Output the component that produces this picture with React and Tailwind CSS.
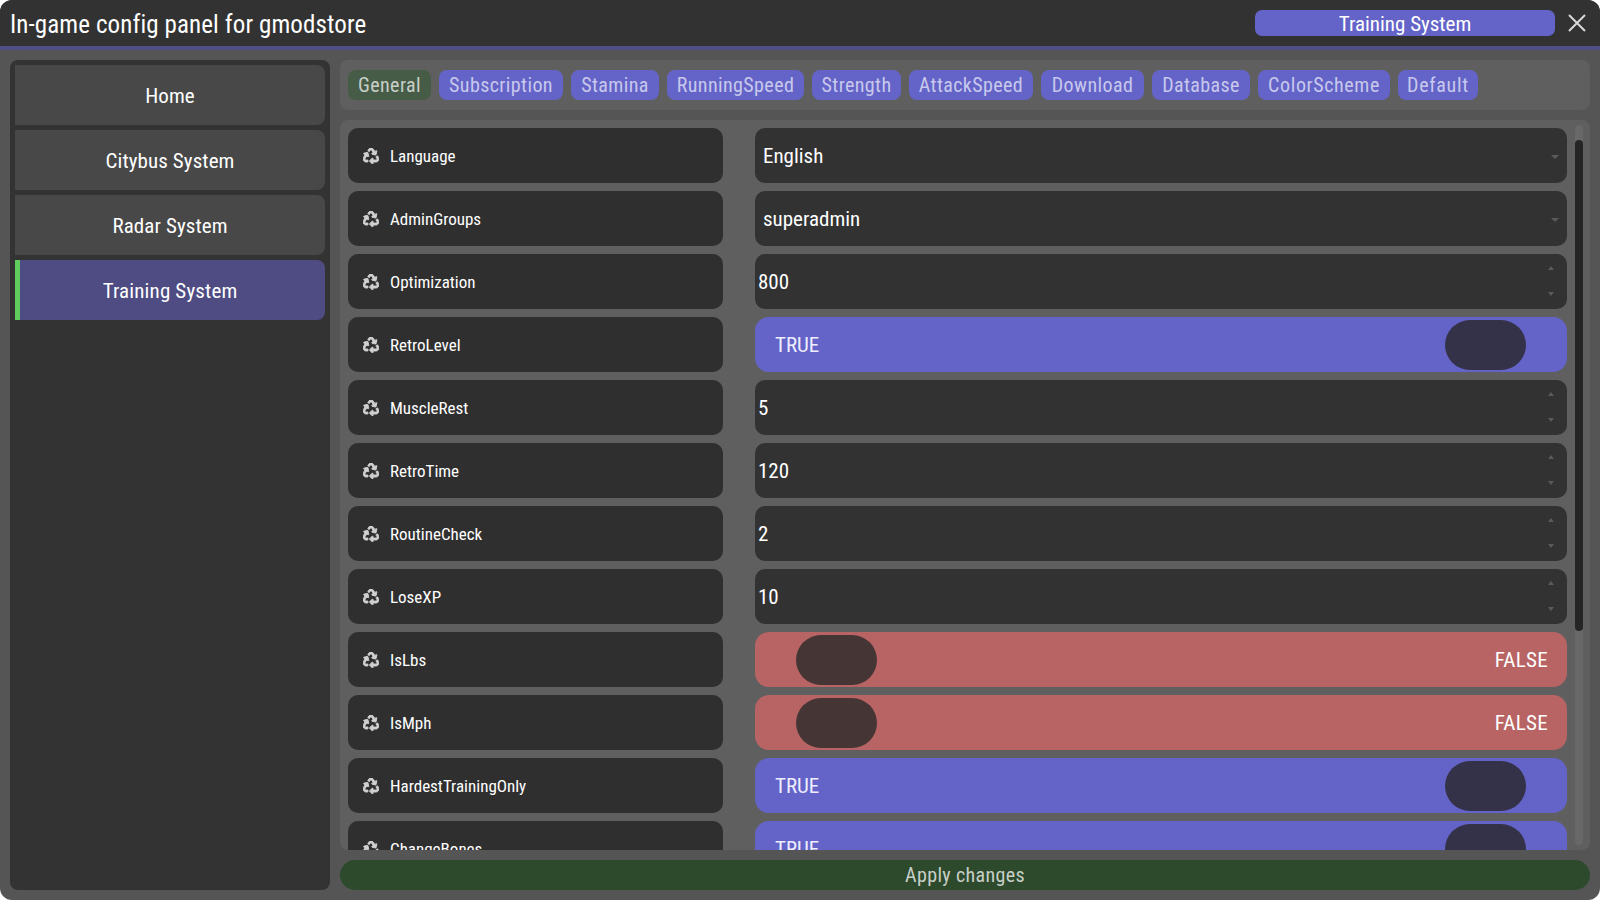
import { FaRecycle } from "react-icons/fa";

const FONT = "font-['Roboto',sans-serif] font-stretch-condensed";

const tabs = [
  ["Subscription","w-[124px]"],
  ["Stamina","w-[88px]"],
  ["RunningSpeed","w-[137px]"],
  ["Strength","w-[89px]"],
  ["AttackSpeed","w-[124px]"],
  ["Download","w-[103px]"],
  ["Database","w-[98px]"],
  ["ColorScheme","w-[132px] tracking-[0.6px]"],
  ["Default","w-[80px] tracking-[0.7px]"],
];
const side = ["Home","Citybus System","Radar System"];
const rows = [
  ["Language","s","English"],
  ["AdminGroups","s","superadmin"],
  ["Optimization","n","800"],
  ["RetroLevel","t"],
  ["MuscleRest","n","5"],
  ["RetroTime","n","120"],
  ["RoutineCheck","n","2"],
  ["LoseXP","n","10"],
  ["IsLbs","f"],
  ["IsMph","f"],
  ["HardestTrainingOnly","t"],
  ["ChangeBones","t"],
];

function Control({ kind, value }) {
  if (kind === "t") return (
    <div className="flex-1 h-full rounded-[14px] bg-[#6464c8] flex items-center justify-between pl-5 pr-[41px] text-[21px] text-[#eeeeff]">
      <span className="pt-[2px]">TRUE</span>
      <div className="w-[81px] h-[50px] rounded-[25px] bg-[#343248]" />
    </div>
  );
  if (kind === "f") return (
    <div className="flex-1 h-full rounded-[14px] bg-[#b86464] flex items-center justify-between pl-[41px] pr-[19px] text-[21px] tracking-[0.3px] text-white">
      <div className="w-[81px] h-[50px] rounded-[25px] bg-[#453535]" />
      <span className="pt-[2px]">FALSE</span>
    </div>
  );
  if (kind === "s") return (
    <div className="flex-1 h-full rounded-[10px] bg-[#323232] flex items-center justify-between pl-2 pr-[8px] text-[21px] text-white">
      <span className="pt-[2px]">{value}</span>
      <span className="w-0 h-0 mt-[2px] border-x-[4px] border-x-transparent border-t-[4px] border-t-[#5a5a5a]" />
    </div>
  );
  return (
    <div className="flex-1 h-full rounded-[10px] bg-[#323232] flex items-center justify-between pl-[3px] pr-3 text-[21px] text-white">
      <span className="pt-[2px]">{value}</span>
      <div className="flex flex-col gap-[22px] pr-[1px] mb-[2px]">
        <span className="w-0 h-0 border-x-[3px] border-x-transparent border-b-[4px] border-b-[#5a5a5a]" />
        <span className="w-0 h-0 border-x-[3px] border-x-transparent border-t-[4px] border-t-[#5a5a5a]" />
      </div>
    </div>
  );
}

export default function App() {
  return (
    <div className={`w-[1600px] h-[900px] overflow-hidden rounded-[12px] bg-[#555555] flex flex-col ${FONT}`}>
      <header className="h-[50px] shrink-0 bg-[#323232] border-b-4 border-[#4f4e85] flex items-center pl-[10px] pr-[13px]">
        <h1 className="text-[25px] font-normal tracking-[0.1px] text-white flex-1 pt-[4px]">In-game config panel for gmodstore</h1>
        <div className="w-[300px] h-[26px] rounded-[7px] bg-[#6464c8] flex items-center justify-center text-[21px] text-white pt-[3px]">Training System</div>
        <svg viewBox="0 0 20 20" className="w-5 h-5 ml-[12px]" stroke="#d8d8d8" strokeWidth="2"><path d="M2 2 L18 18 M18 2 L2 18" /></svg>
      </header>
      <div className="flex-1 min-h-0 flex gap-[10px] p-[10px]">
        <nav className="w-[320px] shrink-0 rounded-[8px] bg-[#333333] p-[5px] flex flex-col gap-[5px]">
          {side.map(s => (
            <div key={s} className="h-[60px] rounded-r-[8px] bg-[#484848] flex items-center justify-center text-[21px] tracking-[0.1px] text-white pt-[4px]">{s}</div>
          ))}
          <div className="h-[60px] rounded-r-[8px] bg-[#4e4c82] border-l-[5px] border-[#5fce5f] flex items-center justify-center text-[21px] tracking-[0.15px] text-white pr-[5px] pt-[4px]">Training System</div>
        </nav>
        <main className="flex-1 min-w-0 flex flex-col gap-[10px]">
          <div className="h-[50px] shrink-0 rounded-[8px] bg-[#5f5f5f] flex items-center gap-[8px] px-[8px]">
            <div className="h-[30px] w-[83px] rounded-[8px] bg-[#475c47] flex items-center justify-center text-[20px] tracking-[0.4px] text-[#c8cfc8]">General</div>
            {tabs.map(([t, cls]) => (
              <div key={t} className={`h-[30px] rounded-[8px] bg-[#6464c8] flex items-center justify-center text-[20px] tracking-[0.4px] text-[#c8c8ec] ${cls}`}>{t}</div>
            ))}
          </div>
          <div className="h-[730px] shrink-0 rounded-[8px] bg-[#5f5f5f] overflow-hidden flex">
            <div className="flex-1 min-w-0 flex flex-col gap-[8px] pt-[8px] pl-[8px]">
              {rows.map(([name, kind, value]) => (
                <div key={name} className="h-[55px] shrink-0 flex gap-[32px]">
                  <div className="w-[375px] h-full shrink-0 rounded-[10px] bg-[#2f2f2f] flex items-center gap-[11px] pl-[15px] text-[17px] text-white">
                    <FaRecycle className="w-4 h-4 shrink-0 text-[#d0d0d0]" stroke="currentColor" strokeWidth="30" />
                    <span className="pt-[2px]">{name}</span>
                  </div>
                  <Control kind={kind} value={value} />
                </div>
              ))}
            </div>
            <div className="w-[8px] ml-[8px] mr-[7px] mt-[5px] mb-[5px] rounded-[4px] bg-[#686868] shrink-0 pt-[15px]">
              <div className="h-[491px] rounded-[4px] bg-[#252525]" />
            </div>
          </div>
          <button className="flex-1 rounded-[15px] bg-[#2d4a2d] text-[20px] tracking-[0.35px] text-[#c8cfc8]">Apply changes</button>
        </main>
      </div>
    </div>
  );
}
